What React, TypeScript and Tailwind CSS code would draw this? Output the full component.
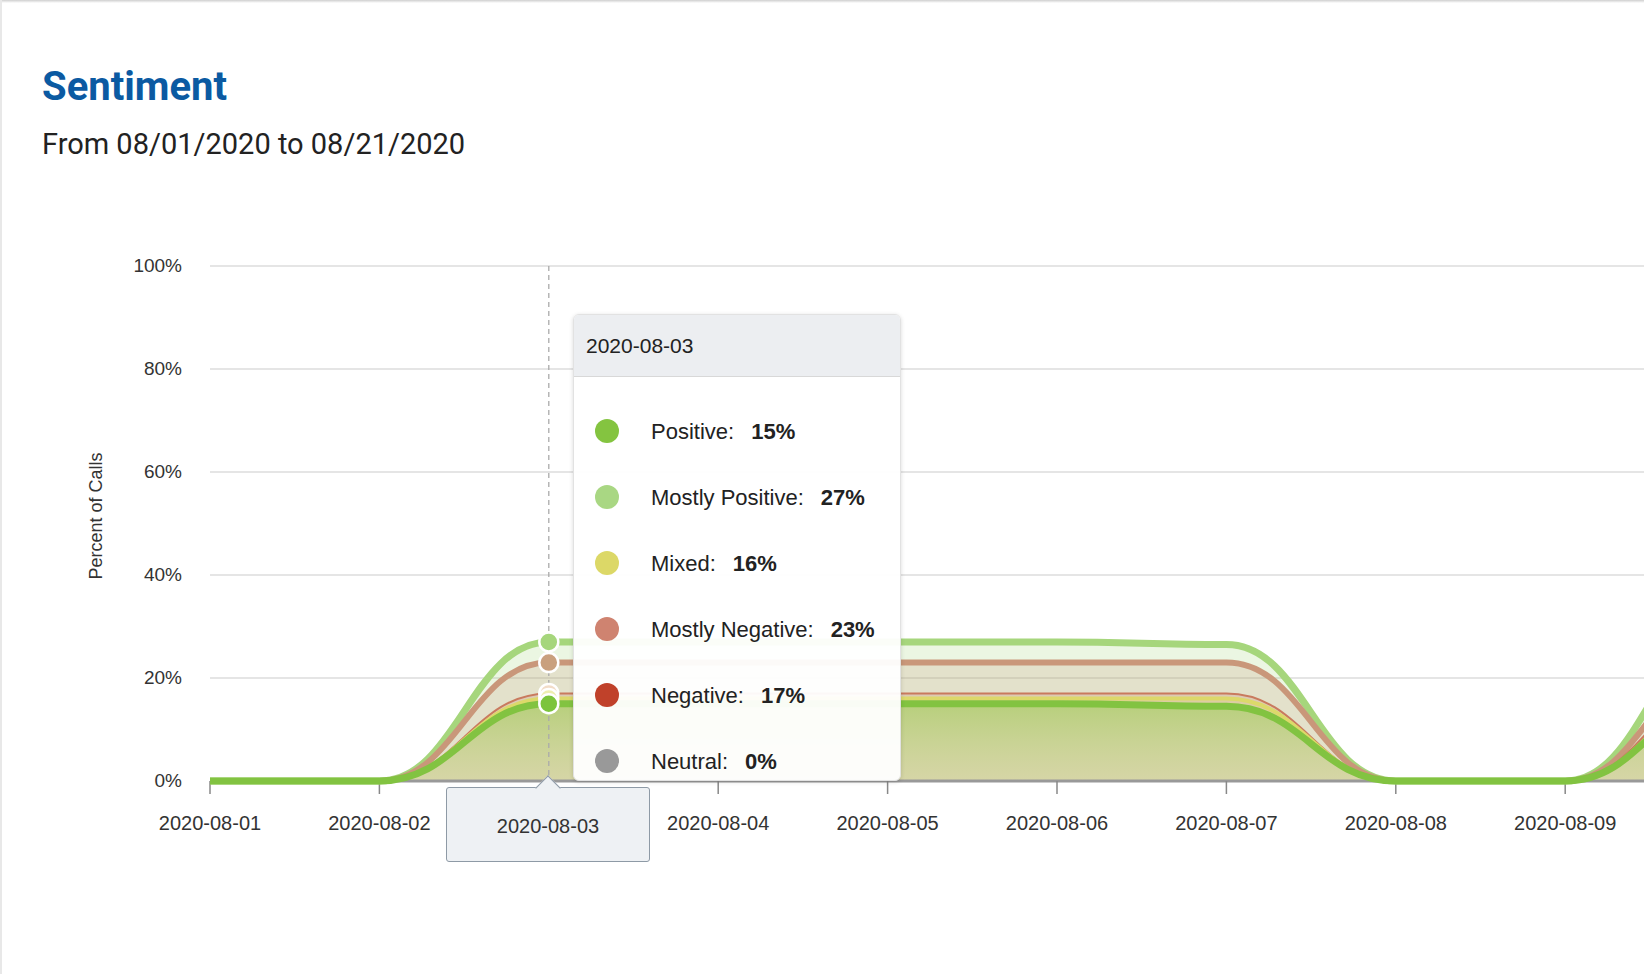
import React from "react";

const X0 = 210, DX = 169.4, Y0 = 584, YH = 515; // svg coords (page y - 200)
const days = ["2020-08-01","2020-08-02","2020-08-03","2020-08-04","2020-08-05","2020-08-06","2020-08-07","2020-08-08","2020-08-09","2020-08-10"];
const yv = (v: number) => Y0 - (v / 100) * YH;
const xv = (i: number) => X0 + i * DX;

function path(vals: number[]) {
  let d = `M${xv(0)},${yv(vals[0])}`;
  for (let i = 1; i < vals.length; i++) {
    const x1 = xv(i - 1), x2 = xv(i);
    d += ` C${x1 + DX / 2.2},${yv(vals[i - 1])} ${x2 - DX / 2.2},${yv(vals[i])} ${x2},${yv(vals[i])}`;
  }
  return d;
}
const area = (vals: number[]) => path(vals) + ` L${xv(vals.length - 1)},${Y0} L${xv(0)},${Y0} Z`;

const series = [
  { name: "Mostly Positive", color: "#a6d67c", w: 7, vals: [0,0,27,27,27,27,26.5,0,0,30] , v: "27%"},
  { name: "Mostly Negative", color: "#c9977a", w: 6, vals: [0,0,23,23,23,23,23,0,0,24], v: "23%" },
  { name: "Negative", color: "#c97a5e", w: 2, vals: [0,0,17,17,17,17,17,0,0,20], v: "17%" },
  { name: "Mixed", color: "#dcd96a", w: 4, vals: [0,0,16,16,16,16,16,0,0,18], v: "16%" },
  { name: "Positive", color: "#82c341", w: 7, vals: [0,0,15,15,15,15,14.5,0,0,17], v: "15%" },
];

const rows = [
  { n: "Positive", c: "#84c440", v: "15%" },
  { n: "Mostly Positive", c: "#a9d783", v: "27%" },
  { n: "Mixed", c: "#dcd867", v: "16%" },
  { n: "Mostly Negative", c: "#cf8370", v: "23%" },
  { n: "Negative", c: "#c0412a", v: "17%" },
  { n: "Neutral", c: "#999999", v: "0%" },
];

export default function App() {
  return (
    <div className="w-[1644px] h-[974px] overflow-hidden bg-white relative border-l-2 border-[#e8e8e8]" style={{ fontFamily: "'Liberation Sans', Arial, sans-serif" }}>
      <div className="h-[3px] bg-gradient-to-b from-[#cfcfcf] to-white" />
      <div className="pl-[40px] pt-[60px]" style={{ fontFamily: "Roboto, sans-serif" }}>
        <h1 className="text-[40px] leading-[48px] font-bold text-[#0b5aa2]">Sentiment</h1>
        <p className="mt-[16px] text-[29px] leading-[34px] text-[#222]">From 08/01/2020 to 08/21/2020</p>
      </div>
      <div className="relative mt-[36px] h-[700px]">
        <svg width="1644" height="700" className="absolute left-[-2px] top-0">
          <defs>
            <linearGradient id="g" x1="0" y1="0" x2="0" y2="1">
              <stop offset="0" stopColor="#a8cf6a" stopOpacity="0.7" />
              <stop offset="1" stopColor="#e4e0c0" stopOpacity="0.5" />
            </linearGradient>
          </defs>
          {[0, 20, 40, 60, 80, 100].map((p) => (
            <g key={p}>
              <line x1={X0} x2={1644} y1={yv(p)} y2={yv(p)} stroke="#dddddd" strokeWidth="1.5" />
              <text x="182" y={yv(p) + 6} textAnchor="end" fontSize="19" fill="#333">{p}%</text>
            </g>
          ))}
          <text transform="translate(102,319) rotate(-90)" textAnchor="middle" fontSize="18" fill="#333">Percent of Calls</text>
          {series.map((s) => (
            <path key={s.name + "a"} d={area(s.vals)} fill={s.color} fillOpacity="0.22" />
          ))}
          <path d={area(series[4].vals)} fill="url(#g)" />
          <line x1={X0} x2="1644" y1={Y0} y2={Y0} stroke="#999" strokeWidth="3" />
          {days.slice(0, 9).map((d, i) => (
            <g key={d}>
              <line x1={xv(i)} x2={xv(i)} y1={Y0} y2={Y0 + 13} stroke="#888" strokeWidth="1.5" />
              {i !== 2 && <text x={xv(i)} y={Y0 + 49} textAnchor="middle" fontSize="20" fill="#333">{d}</text>}
            </g>
          ))}
          {series.map((s) => (
            <path key={s.name} d={path(s.vals)} fill="none" stroke={s.color} strokeWidth={s.w} />
          ))}
          <line x1={xv(2)} x2={xv(2)} y1={yv(100)} y2={Y0} stroke="#aaa" strokeWidth="1.3" strokeDasharray="5 4" />
          {[[17, "#f2dcc8"], [16, "#eeeeb0"], [23, "#c9a07e"], [27, "#a6d67c"], [15, "#7cc43c"]].map(([v, c], i) => (
            <circle key={i} cx={xv(2)} cy={yv(v as number)} r="9.5" fill={c as string} stroke="#fff" strokeWidth="2.5" />
          ))}
        </svg>
        {/* x-axis highlighted label */}
        <div className="absolute left-[444px] top-[590px] w-[204px] h-[75px] bg-[#eef1f4] border border-[#8e9aa6] rounded-[3px] flex items-center justify-center text-[20px] text-[#333] pt-[2px]">
          2020-08-03
          <div className="absolute left-1/2 -top-[9px] -ml-[9px] w-[18px] h-[18px] bg-[#eef1f4] border-l border-t border-[#8e9aa6] rotate-45" />
        </div>
        {/* tooltip */}
        <div className="absolute left-[571px] top-[117px] w-[328px] h-[467px] bg-white/95 rounded-[6px] border border-[#e2e2e2] shadow-[0_1px_4px_rgba(0,0,0,0.15)] overflow-hidden">
          <div className="h-[62px] bg-[#eceef1] border-b border-[#d8d8d8] flex items-center px-[12px] text-[21px] text-[#222]">2020-08-03</div>
          <div className="flex flex-col pt-[21px]">
            {rows.map((r) => (
              <div key={r.n} className="h-[66px] flex items-center pl-[21px] text-[22px] text-[#222]">
                <span className="w-[24px] h-[24px] rounded-full shrink-0" style={{ background: r.c }} />
                <span className="ml-[32px]">{r.n}:</span>
                <span className="ml-[17px] font-bold">{r.v}</span>
              </div>
            ))}
          </div>
        </div>
      </div>
    </div>
  );
}
